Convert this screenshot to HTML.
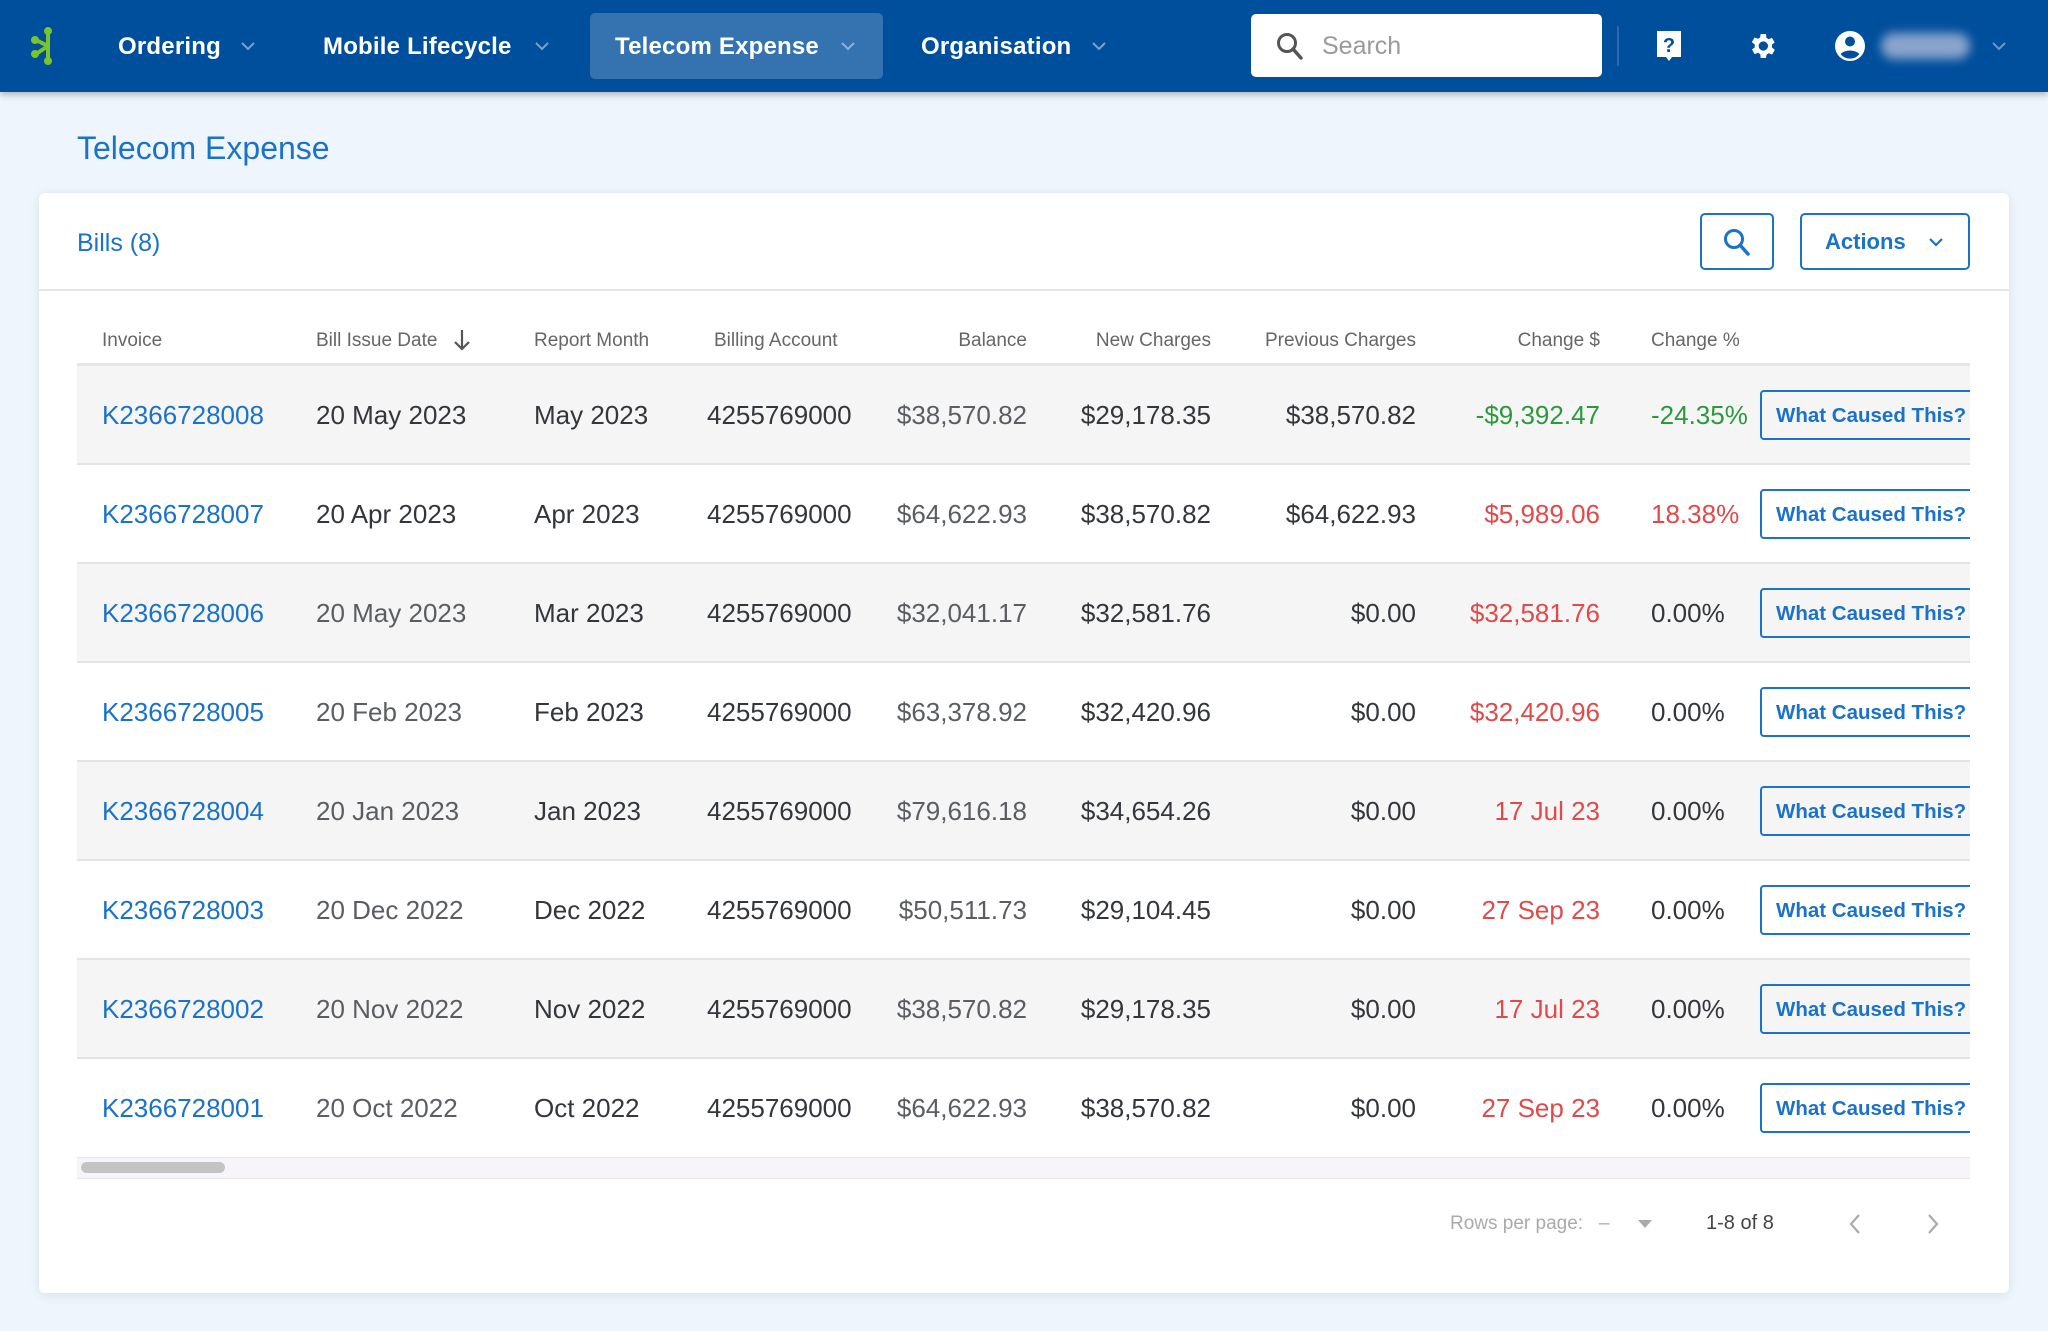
<!DOCTYPE html>
<html><head><meta charset="utf-8"><style>
*{margin:0;padding:0;box-sizing:border-box}
body{width:2048px;height:1331px;background:#eef5fc;font-family:"Liberation Sans",sans-serif;position:relative;overflow:hidden;color:#33363b}
.nav{position:absolute;left:0;top:0;width:2048px;height:92px;background:#004f9c;box-shadow:0 3px 6px rgba(0,0,0,.25)}
.ni{position:absolute;top:33px;font-size:24px;color:#fff;font-weight:bold;letter-spacing:.2px}
.chev{position:absolute;top:39px;width:14px;height:14px}
.abs{position:absolute}
.card{position:absolute;left:39px;top:193px;width:1970px;height:1100px;background:#fff;border-radius:6px;box-shadow:0 2px 10px rgba(0,40,90,.1)}
.hd{font-size:19px;color:#666;position:absolute;top:330px}
.row{position:absolute;left:77px;width:1893px;height:99px;border-bottom:2px solid #e3e3e3;overflow:hidden}
.row.g{background:#f5f5f5}
.c{position:absolute;top:34px;font-size:26px;color:#33363b;white-space:nowrap}
.r{text-align:right}
.inv{color:#1a72c9}
.gr{color:#2c9a3a}.rd{color:#e04a4a}.mu{color:#5a5d62}
.btn{position:absolute;left:1683px;top:24px;width:240px;height:50px;border:2px solid #1a72c9;border-radius:4px;color:#1a72c9;font-size:20.5px;font-weight:bold;padding:12px 0 0 14px;white-space:nowrap}
</style></head><body>
<div class="nav">
 <svg class="abs" style="left:30px;top:26px" width="32" height="40" viewBox="0 0 32 40"><g stroke="#7cc42b" stroke-width="4" fill="#7cc42b" stroke-linecap="round"><line x1="18" y1="6" x2="18" y2="34"/><line x1="18" y1="20" x2="6" y2="14"/><line x1="18" y1="20" x2="6" y2="28"/><circle cx="18" cy="5" r="2"/><circle cx="18" cy="35" r="2"/><circle cx="5" cy="14" r="2"/><circle cx="5" cy="28" r="2"/></g></svg>
 <div class="abs" style="left:590px;top:13px;width:293px;height:66px;background:#3572b0;border-radius:5px"></div>
 <div class="ni" style="left:118px">Ordering</div>
 <div class="ni" style="left:323px">Mobile Lifecycle</div>
 <div class="ni" style="left:615px">Telecom Expense</div>
 <div class="ni" style="left:921px">Organisation</div>
 <svg class="chev" style="left:241px" viewBox="0 0 14 14"><path d="M1 4l6 6 6-6" stroke="#7d9fcc" stroke-width="2" fill="none"/></svg>
 <svg class="chev" style="left:535px" viewBox="0 0 14 14"><path d="M1 4l6 6 6-6" stroke="#7d9fcc" stroke-width="2" fill="none"/></svg>
 <svg class="chev" style="left:841px" viewBox="0 0 14 14"><path d="M1 4l6 6 6-6" stroke="#8fb0d8" stroke-width="2" fill="none"/></svg>
 <svg class="chev" style="left:1092px" viewBox="0 0 14 14"><path d="M1 4l6 6 6-6" stroke="#7d9fcc" stroke-width="2" fill="none"/></svg>
 <div class="abs" style="left:1251px;top:14px;width:351px;height:63px;background:#fff;border-radius:5px"></div>
 <svg class="abs" style="left:1275px;top:31px" width="30" height="30" viewBox="0 0 30 30"><circle cx="12" cy="12" r="8.5" stroke="#555" stroke-width="3" fill="none"/><line x1="18" y1="18" x2="26" y2="27" stroke="#555" stroke-width="3.5" stroke-linecap="round"/></svg>
 <div class="abs" style="left:1322px;top:32px;font-size:25px;color:#9a9a9a">Search</div>
 <div class="abs" style="left:1617px;top:26px;width:2px;height:40px;background:#2f69a8"></div>
 <svg class="abs" style="left:1654px;top:29px" width="30" height="36" viewBox="0 0 30 36"><path d="M3 2h24v26h-9l-3 4-3-4H3z" fill="#fff"/><text x="15" y="23" font-family="Liberation Sans" font-weight="bold" font-size="20" fill="#004f9c" text-anchor="middle">?</text></svg>
 <svg class="abs" style="left:1746px;top:30px" width="32" height="32" viewBox="0 0 24 24"><path fill="#fff" d="M19.4 13a7.8 7.8 0 0 0 0-2l2.1-1.6-2-3.5-2.5 1a7.6 7.6 0 0 0-1.7-1L15 3h-4l-.4 2.6a7.6 7.6 0 0 0-1.7 1l-2.5-1-2 3.5L6.6 11a7.8 7.8 0 0 0 0 2l-2.1 1.6 2 3.5 2.5-1a7.6 7.6 0 0 0 1.700 1L11 21h4l.4-2.6a7.6 7.6 0 0 0 1.7-1l2.5 1 2-3.5zM13 15.5a3.5 3.5 0 1 1 0-7 3.5 3.5 0 0 1 0 7z"/></svg>
 <svg class="abs" style="left:1833px;top:29px" width="34" height="34" viewBox="0 0 34 34"><circle cx="17" cy="17" r="15" fill="#fff"/><circle cx="17" cy="12.5" r="5" fill="#004f9c"/><path d="M7.5 25a11 7 0 0 1 19 0a12 12 0 0 1-19 0z" fill="#004f9c"/></svg>
 <div class="abs" style="left:1881px;top:33px;width:89px;height:26px;background:#8aa4cc;border-radius:13px;filter:blur(5px)"></div>
 <svg class="chev" style="left:1992px" viewBox="0 0 14 14"><path d="M1 4l6 6 6-6" stroke="#6f94c6" stroke-width="2" fill="none"/></svg>
</div>
<div class="abs" style="left:77px;top:130px;font-size:32px;color:#1a72c9">Telecom Expense</div>
<div class="card"></div>
<div class="abs" style="left:77px;top:229px;font-size:25px;color:#1a72c9">Bills (8)</div>
<div class="abs" style="left:1700px;top:213px;width:74px;height:57px;border:2px solid #1a72c9;border-radius:5px"></div>
<svg class="abs" style="left:1722px;top:227px" width="30" height="30" viewBox="0 0 30 30"><circle cx="12" cy="12" r="8.5" stroke="#1a72c9" stroke-width="3" fill="none"/><line x1="18" y1="18" x2="26" y2="27" stroke="#1a72c9" stroke-width="3.5" stroke-linecap="round"/></svg>
<div class="abs" style="left:1800px;top:213px;width:170px;height:57px;border:2px solid #1a72c9;border-radius:5px"></div>
<div class="abs" style="left:1825px;top:229px;font-size:22px;color:#1a72c9;font-weight:bold">Actions</div>
<svg class="abs" style="left:1929px;top:235px" width="14" height="14" viewBox="0 0 14 14"><path d="M1 4l6 6 6-6" stroke="#1a72c9" stroke-width="2.2" fill="none"/></svg>
<div class="abs" style="left:39px;top:289px;width:1970px;height:2px;background:#e6e6e6"></div>

<div class="hd" style="left:102px">Invoice</div>
<div class="hd" style="left:316px">Bill Issue Date</div>
<svg class="abs" style="left:452px;top:328px" width="20" height="24" viewBox="0 0 20 24"><path d="M10 2v19M3 14l7 7 7-7" stroke="#555" stroke-width="2.2" fill="none"/></svg>
<div class="hd" style="left:534px">Report Month</div>
<div class="hd" style="left:714px">Billing Account</div>
<div class="hd r" style="left:827px;width:200px">Balance</div>
<div class="hd r" style="left:1011px;width:200px">New Charges</div>
<div class="hd r" style="left:1216px;width:200px">Previous Charges</div>
<div class="hd r" style="left:1400px;width:200px">Change $</div>
<div class="hd" style="left:1651px">Change %</div>
<div class="abs" style="left:77px;top:363px;width:1893px;height:3px;background:#e6e6e6"></div>

<div class="row g" style="top:366px"><div class="c inv" style="left:25px">K2366728008</div><div class="c" style="left:239px">20 May 2023</div><div class="c" style="left:457px">May 2023</div><div class="c" style="left:630px">4255769000</div><div class="c r mu" style="left:750px;width:200px">$38,570.82</div><div class="c r" style="left:934px;width:200px">$29,178.35</div><div class="c r" style="left:1139px;width:200px">$38,570.82</div><div class="c r gr" style="left:1323px;width:200px">-$9,392.47</div><div class="c gr" style="left:1574px">-24.35%</div><div class="btn">What Caused This?</div></div>
<div class="row" style="top:465px"><div class="c inv" style="left:25px">K2366728007</div><div class="c" style="left:239px">20 Apr 2023</div><div class="c" style="left:457px">Apr 2023</div><div class="c" style="left:630px">4255769000</div><div class="c r mu" style="left:750px;width:200px">$64,622.93</div><div class="c r" style="left:934px;width:200px">$38,570.82</div><div class="c r" style="left:1139px;width:200px">$64,622.93</div><div class="c r rd" style="left:1323px;width:200px">$5,989.06</div><div class="c rd" style="left:1574px">18.38%</div><div class="btn">What Caused This?</div></div>
<div class="row g" style="top:564px"><div class="c inv" style="left:25px">K2366728006</div><div class="c mu" style="left:239px">20 May 2023</div><div class="c" style="left:457px">Mar 2023</div><div class="c" style="left:630px">4255769000</div><div class="c r mu" style="left:750px;width:200px">$32,041.17</div><div class="c r" style="left:934px;width:200px">$32,581.76</div><div class="c r" style="left:1139px;width:200px">$0.00</div><div class="c r rd" style="left:1323px;width:200px">$32,581.76</div><div class="c" style="left:1574px">0.00%</div><div class="btn">What Caused This?</div></div>
<div class="row" style="top:663px"><div class="c inv" style="left:25px">K2366728005</div><div class="c mu" style="left:239px">20 Feb 2023</div><div class="c" style="left:457px">Feb 2023</div><div class="c" style="left:630px">4255769000</div><div class="c r mu" style="left:750px;width:200px">$63,378.92</div><div class="c r" style="left:934px;width:200px">$32,420.96</div><div class="c r" style="left:1139px;width:200px">$0.00</div><div class="c r rd" style="left:1323px;width:200px">$32,420.96</div><div class="c" style="left:1574px">0.00%</div><div class="btn">What Caused This?</div></div>
<div class="row g" style="top:762px"><div class="c inv" style="left:25px">K2366728004</div><div class="c mu" style="left:239px">20 Jan 2023</div><div class="c" style="left:457px">Jan 2023</div><div class="c" style="left:630px">4255769000</div><div class="c r mu" style="left:750px;width:200px">$79,616.18</div><div class="c r" style="left:934px;width:200px">$34,654.26</div><div class="c r" style="left:1139px;width:200px">$0.00</div><div class="c r rd" style="left:1323px;width:200px">17 Jul 23</div><div class="c" style="left:1574px">0.00%</div><div class="btn">What Caused This?</div></div>
<div class="row" style="top:861px"><div class="c inv" style="left:25px">K2366728003</div><div class="c mu" style="left:239px">20 Dec 2022</div><div class="c" style="left:457px">Dec 2022</div><div class="c" style="left:630px">4255769000</div><div class="c r mu" style="left:750px;width:200px">$50,511.73</div><div class="c r" style="left:934px;width:200px">$29,104.45</div><div class="c r" style="left:1139px;width:200px">$0.00</div><div class="c r rd" style="left:1323px;width:200px">27 Sep 23</div><div class="c" style="left:1574px">0.00%</div><div class="btn">What Caused This?</div></div>
<div class="row g" style="top:960px"><div class="c inv" style="left:25px">K2366728002</div><div class="c mu" style="left:239px">20 Nov 2022</div><div class="c" style="left:457px">Nov 2022</div><div class="c" style="left:630px">4255769000</div><div class="c r mu" style="left:750px;width:200px">$38,570.82</div><div class="c r" style="left:934px;width:200px">$29,178.35</div><div class="c r" style="left:1139px;width:200px">$0.00</div><div class="c r rd" style="left:1323px;width:200px">17 Jul 23</div><div class="c" style="left:1574px">0.00%</div><div class="btn">What Caused This?</div></div>
<div class="row" style="top:1059px;border-bottom:none"><div class="c inv" style="left:25px">K2366728001</div><div class="c mu" style="left:239px">20 Oct 2022</div><div class="c" style="left:457px">Oct 2022</div><div class="c" style="left:630px">4255769000</div><div class="c r mu" style="left:750px;width:200px">$64,622.93</div><div class="c r" style="left:934px;width:200px">$38,570.82</div><div class="c r" style="left:1139px;width:200px">$0.00</div><div class="c r rd" style="left:1323px;width:200px">27 Sep 23</div><div class="c" style="left:1574px">0.00%</div><div class="btn">What Caused This?</div></div>

<div class="abs" style="left:77px;top:1157px;width:1893px;height:22px;background:#f8f5fa;border-top:1px solid #e6e6e6;border-bottom:1px solid #e6e6e6"></div>
<div class="abs" style="left:81px;top:1162px;width:144px;height:11px;background:#c4c4c4;border-radius:6px"></div>

<div class="abs" style="left:1450px;top:1213px;font-size:19px;color:#aaa">Rows per page:&nbsp;&nbsp; –</div>
<svg class="abs" style="left:1637px;top:1219px" width="16" height="10" viewBox="0 0 16 10"><path d="M1 1h14l-7 8z" fill="#aaa"/></svg>
<div class="abs" style="left:1706px;top:1212px;font-size:20px;color:#444">1-8 of 8</div>
<svg class="abs" style="left:1848px;top:1212px" width="14" height="24" viewBox="0 0 14 24"><path d="M11 3L3 12l8 9" stroke="#aaa" stroke-width="2.2" fill="none"/></svg>
<svg class="abs" style="left:1926px;top:1212px" width="14" height="24" viewBox="0 0 14 24"><path d="M3 3l8 9-8 9" stroke="#aaa" stroke-width="2.2" fill="none"/></svg>
</body></html>
